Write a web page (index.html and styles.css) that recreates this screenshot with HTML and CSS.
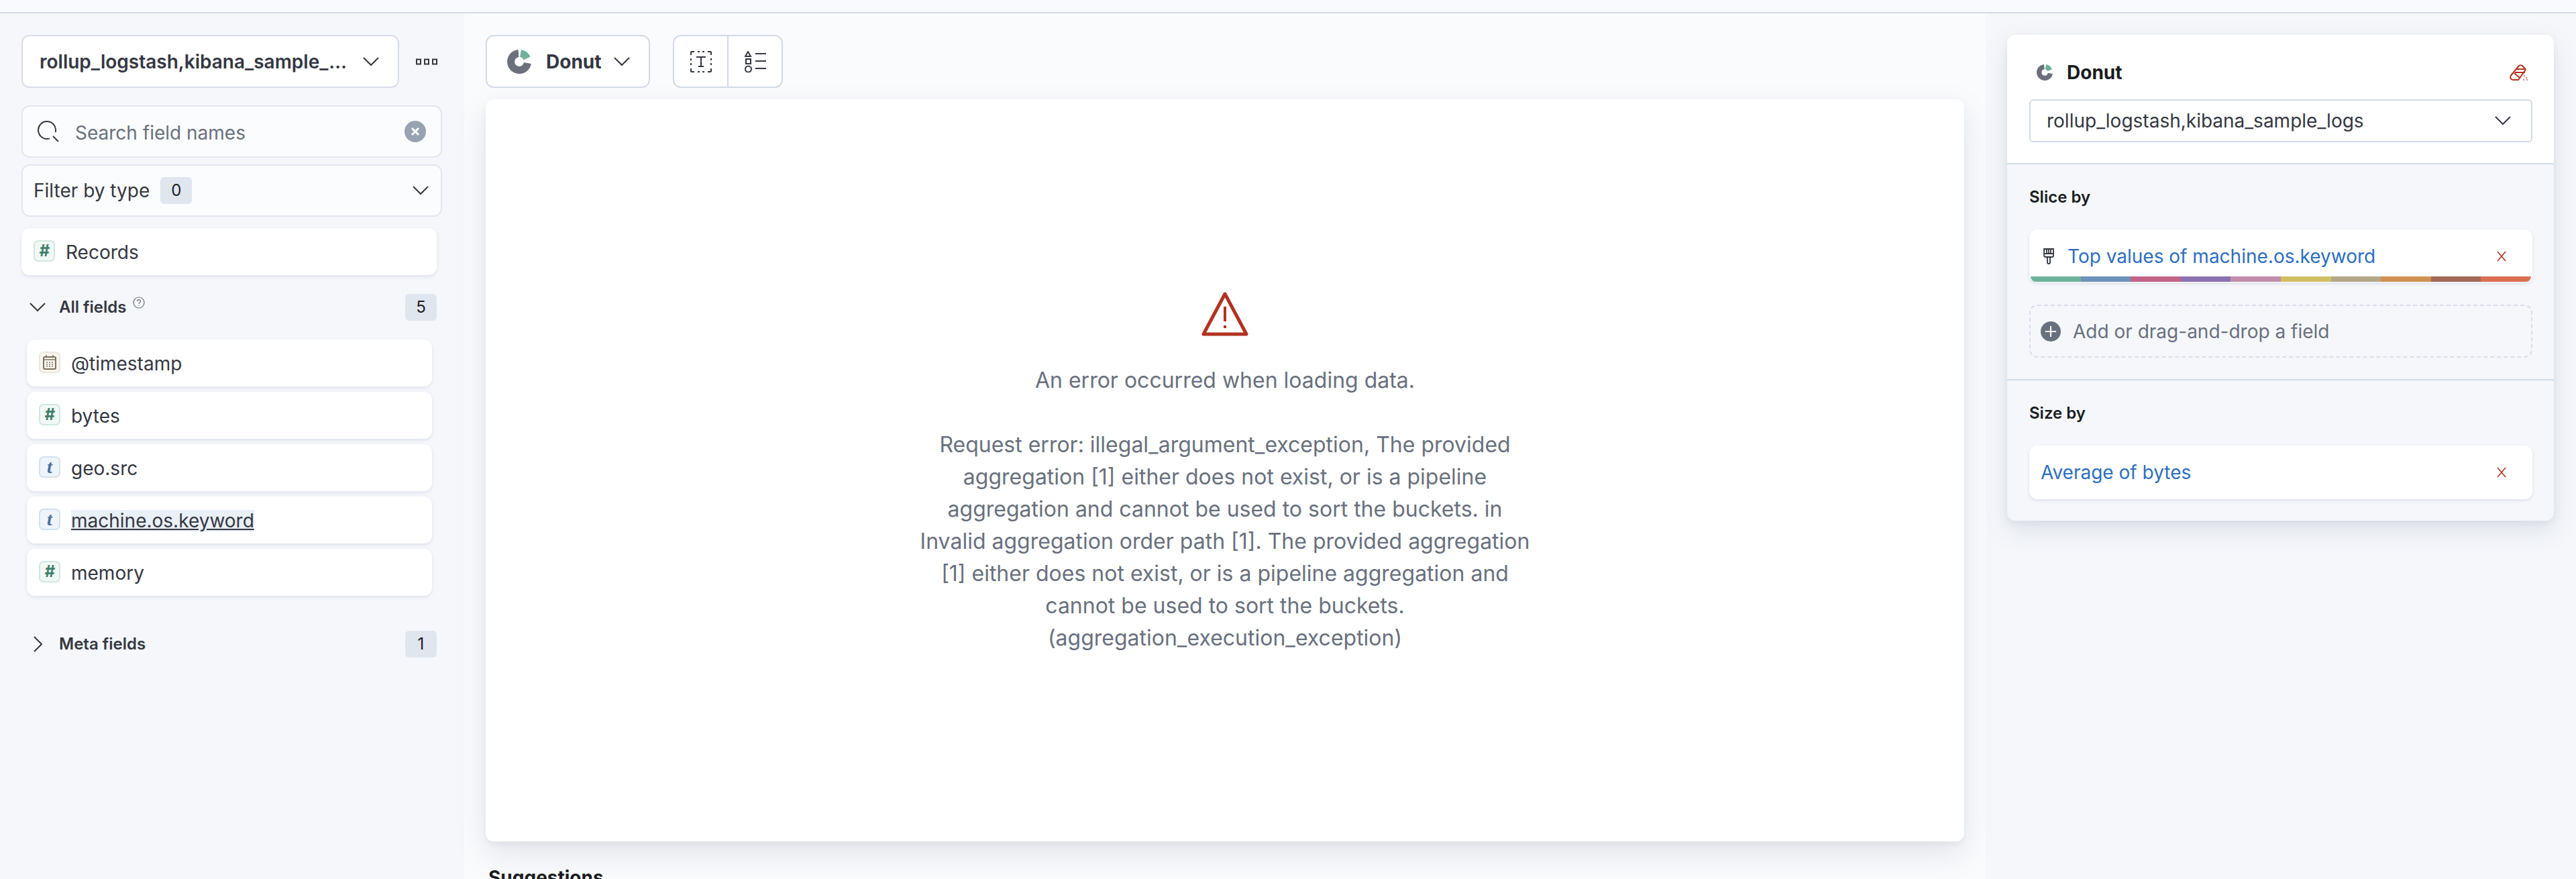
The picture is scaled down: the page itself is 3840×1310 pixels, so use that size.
FILE: index.html
```html
<!DOCTYPE html>
<html lang="en">
<head>
    <meta charset="UTF-8">
    <title>Lens - Donut</title>
    <link rel="stylesheet" href="styles.css">
</head>
<body>
    <div class="topbar"></div>
    <div class="app">
        <!-- field list -->
        <aside class="sidebar">
            <div class="index-row">
                <div class="index-select">
                    <span class="index-name">rollup_logstash,kibana_sample_logs</span>
                    <svg class="chev" viewBox="0 0 24 14"><path d="M1 1l11 11L23 1"/></svg>
                </div>
                <svg class="more" viewBox="0 0 32 10"><path d="M1 1.500h6v7H1zM13 1.500h6v7h-6zM25 1.500h6v7h-6z"/></svg>
            </div>
            <div class="search-box">
                <svg class="search-icon" viewBox="0 0 32 32"><path d="M26.700 17A13 13 0 1 0 18 26.400M23 23l8 8"/></svg>
                <span class="placeholder">Search field names</span>
                <svg class="clear-icon" viewBox="0 0 32 32"><circle cx="16" cy="16" r="16"/><path d="M11 11l10 10M21 11L11 21"/></svg>
            </div>
            <div class="filter-box">
                <span>Filter by type</span>
                <span class="count count-filter">0</span>
                <svg class="chev chev-end" viewBox="0 0 24 14"><path d="M1 1l11 11L23 1"/></svg>
            </div>
            <div class="field field-records"><span class="type type-num">#</span><span class="field-name">Records</span></div>
            <div class="group-row group-all">
                <svg class="chev chev-group" viewBox="0 0 24 14"><path d="M1 1l11 11L23 1"/></svg>
                <span class="group-name">All fields</span>
                <svg class="help-icon" viewBox="0 0 18 18"><circle cx="9" cy="9" r="8"/><path d="M6.500 7c0-3.200 5-3.200 5 0 0 2-2.500 2-2.500 4M9 13v1"/></svg>
                <span class="count">5</span>
            </div>
            <div class="field-list">
                <div class="field">
                    <span class="type type-date">
                        <svg viewBox="0 0 20 24"><rect x="1" y="4" width="18" height="18" rx="2"/><path d="M5 1v4M15 1v4M1 8h18M5 12h2M9 12h2M13 12h2M5 15h2M9 15h2M13 15h2M5 18h2M9 18h2M13 18h2"/></svg>
                    </span>
                    <span class="field-name">@timestamp</span>
                </div>
                <div class="field"><span class="type type-num">#</span><span class="field-name">bytes</span></div>
                <div class="field"><span class="type type-text">t</span><span class="field-name">geo.src</span></div>
                <div class="field"><span class="type type-text">t</span><span class="field-name field-hover">machine.os.keyword</span></div>
                <div class="field"><span class="type type-num">#</span><span class="field-name">memory</span></div>
            </div>
            <div class="group-row group-meta">
                <svg class="chev chev-closed" viewBox="0 0 14 24"><path d="M1 1l11 11L1 23"/></svg>
                <span class="group-name">Meta fields</span>
                <span class="count">1</span>
            </div>
        </aside>

        <!-- workspace -->
        <main class="workspace">
            <div class="toolbar">
                <div class="chart-switch">
                    <svg class="donut-big" viewBox="0 0 36 36">
                        <path class="donut-gray" d="M30.400 20A12.500 12.500 0 1 1 17 5.500"/>
                        <path class="donut-green" d="M20 5.600A12.500 12.500 0 0 1 29.500 13"/>
                    </svg>
                    <span>Donut</span>
                    <svg class="chev" viewBox="0 0 24 14"><path d="M1 1l11 11L23 1"/></svg>
                </div>
                <div class="btn-group">
                    <div class="icon-btn">
                        <svg viewBox="0 0 32 32"><path d="M1 6V2a1 1 0 0 1 1-1h4M11 1h3M18 1h3M26 1h4a1 1 0 0 1 1 1v4M1 11v3M1 18v3M31 11v3M31 18v3M1 26v4a1 1 0 0 0 1 1h4M11 31h3M18 31h3M26 31h4a1 1 0 0 0 1-1v-4M9 9h14M16 9v14M12 23h8"/></svg>
                    </div>
                    <div class="icon-btn">
                        <svg viewBox="0 0 32 32"><path d="M5 1l4 7H1zM2 12h7v7H2zM16 4h16M16 15h16M16 26h16"/><circle cx="5.500" cy="27" r="4.500"/></svg>
                    </div>
                </div>
            </div>
            <section class="chart-card">
                <svg class="warn-icon" viewBox="0 0 70 66"><path d="M35 3L67 63H3z"/><path class="warn-mark" d="M35 22v22M35 50v4"/></svg>
                <p class="error-title">An error occurred when loading data.</p>
                <p class="error-text">Request error: illegal_argument_exception, The provided aggregation [1] either does not exist, or is a pipeline aggregation and cannot be used to sort the buckets. in Invalid aggregation order path [1]. The provided aggregation [1] either does not exist, or is a pipeline aggregation and cannot be used to sort the buckets. (aggregation_execution_exception)</p>
            </section>
            <h2 class="suggestions">Suggestions</h2>
        </main>

        <!-- config panel -->
        <aside class="config">
            <div class="config-card">
                <header class="config-head">
                    <div class="config-title">
                        <svg class="donut-small" viewBox="0 0 36 36">
                            <path class="donut-gray" d="M30.400 20A12.500 12.500 0 1 1 17 5.500"/>
                            <path class="donut-green" d="M20 5.600A12.500 12.500 0 0 1 29.500 13"/>
                        </svg>
                        <span>Donut</span>
                        <svg class="eraser" viewBox="0 0 28 24"><path d="M14 23H6a4 4 0 0 1-3-6.500L14.500 2.500a4 4 0 0 1 6 0l3 3a3 3 0 0 1 0 4.500zM12 7h12M9 12h15M8 13l8 7"/><path class="eraser-dots" d="M22 17h2M25 20h2M21 23h2M26 23h2"/></svg>
                    </div>
                    <div class="layer-select">
                        <span>rollup_logstash,kibana_sample_logs</span>
                        <svg class="chev" viewBox="0 0 24 14"><path d="M1 1l11 11L23 1"/></svg>
                    </div>
                </header>
                <div class="config-group">
                    <h3>Slice by</h3>
                    <div class="dim-card">
                        <div class="dim-row">
                            <svg class="brush" viewBox="0 0 18 24"><path d="M2 1h14v10a2 2 0 0 1-2 2H4a2 2 0 0 1-2-2zM2 8h14M6 1v7M9 1v7M12 1v7M7 13v8a2 2 0 0 0 4 0v-8"/></svg>
                            <span class="dim-name">Top values of machine.os.keyword</span>
                            <svg class="remove" viewBox="0 0 14 16"><path d="M1 1l12 14M13 1L1 15"/></svg>
                        </div>
                        <div class="palette">
                            <i class="c1"></i><i class="c2"></i><i class="c3"></i><i class="c4"></i><i class="c5"></i><i class="c6"></i><i class="c7"></i><i class="c8"></i><i class="c9"></i><i class="c10"></i>
                        </div>
                    </div>
                    <div class="add-field">
                        <svg class="plus" viewBox="0 0 30 30"><circle cx="15" cy="15" r="15"/><path d="M15 7v16M7 15h16"/></svg>
                        <span>Add or drag-and-drop a field</span>
                    </div>
                </div>
                <div class="config-group config-group-last">
                    <h3>Size by</h3>
                    <div class="dim-card dim-card-plain">
                        <span class="dim-name">Average of bytes</span>
                        <svg class="remove" viewBox="0 0 14 16"><path d="M1 1l12 14M13 1L1 15"/></svg>
                    </div>
                </div>
            </div>
        </aside>
    </div>
</body>
</html>
```

FILE: styles.css
```css
* {
    box-sizing: border-box;
}

html, body {
    margin: 0;
    height: 1310px;
    overflow: hidden;
}

body {
    font-family: Inter, "Liberation Sans", sans-serif;
    font-size: 28px;
    line-height: 40px;
    color: #343741;
    background: #f5f7fb;
}

svg {
    display: block;
    flex: none;
    fill: none;
}

.topbar {
    height: 20px;
    background: #f9fafd;
    border-bottom: 2px solid #d3dae6;
}

.app {
    display: flex;
    height: 1290px;
}

.chev path {
    fill: none;
    stroke: #343741;
    stroke-width: 2;
}

.chev {
    width: 24px;
    height: 14px;
}

/* sidebar */
.sidebar {
    width: 692px;
    flex: none;
    padding: 32px 33px 0 32px;
}

.index-row {
    display: flex;
    align-items: center;
    justify-content: space-between;
    margin-bottom: 26px;
    padding-right: 7px;
}

.index-select {
    width: 563px;
    height: 79px;
    display: flex;
    align-items: center;
    justify-content: space-between;
    padding: 0 28px 0 25px;
    background: #fff;
    border: 2px solid #d9deea;
    border-radius: 12px;
}

.index-name {
    width: 465px;
    font-weight: 600;
    white-space: nowrap;
    overflow: hidden;
    text-overflow: ellipsis;
}

.more {
    width: 32px;
    height: 10px;
}

.more path {
    stroke: #343741;
    stroke-width: 2;
}

.search-box, .filter-box {
    height: 78px;
    display: flex;
    align-items: center;
    background: #fbfcfd;
    border: 2px solid #e3e6f0;
    border-radius: 12px;
}

.search-box {
    padding: 0 22px;
    margin-bottom: 10px;
}

.search-icon {
    width: 32px;
    height: 32px;
    margin-right: 24px;
}

.search-icon path {
    stroke: #343741;
    stroke-width: 2;
}

.placeholder {
    flex: 1;
    padding-top: 3px;
    color: #69707d;
}

.clear-icon {
    width: 32px;
    height: 32px;
}

.clear-icon circle {
    fill: #98a2b3;
}

.clear-icon path {
    stroke: #fff;
    stroke-width: 3;
}

.filter-box {
    padding: 0 18px 0 16px;
    margin-bottom: 17px;
}

.count {
    width: 47px;
    height: 40px;
    display: flex;
    align-items: center;
    justify-content: center;
    background: #e0e5ee;
    border-radius: 6px;
    font-size: 24px;
    color: #1a1c21;
}

.count-filter {
    margin-left: 16px;
}

.chev-end {
    margin-left: auto;
}

.field {
    height: 70px;
    display: flex;
    align-items: center;
    padding-left: 18px;
    background: #fff;
    border-radius: 12px;
    box-shadow: 0 2px 5px rgba(152, 162, 179, 0.25);
}

.field-records {
    width: 619px;
    margin-bottom: 28px;
}

.field-name {
    margin-top: 2px;
}

.type {
    width: 32px;
    height: 32px;
    margin: -2px 16px 0 0;
    display: flex;
    align-items: center;
    justify-content: center;
    flex: none;
    border: 2px solid;
    border-radius: 7px;
    font-size: 24px;
    line-height: 1;
    font-style: italic;
    font-weight: 700;
}

.type-num {
    color: #3f7f6a;
    background: #f1f8f5;
    border-color: #cfe7de;
}

.type-text {
    color: #4a6f9c;
    background: #eef4fa;
    border-color: #d3e1f1;
    font-family: "Liberation Serif", serif;
    font-size: 28px;
}

.type-date {
    background: #f8f5f0;
    border-color: #ece7de;
}

.type-date svg {
    width: 20px;
    height: 24px;
}

.type-date svg rect, .type-date svg path {
    stroke: #7c6f5c;
    stroke-width: 2;
}

.type-date svg path {
    stroke-width: 1.500;
}

.group-row {
    height: 40px;
    width: 619px;
    display: flex;
    align-items: center;
}

.group-all {
    padding-left: 12px;
    margin-bottom: 28px;
}

.group-meta {
    padding-left: 18px;
    margin-top: 52px;
}

.group-name {
    font-size: 24px;
    font-weight: 600;
}

.chev-group {
    margin-right: 20px;
}

.chev-closed {
    width: 14px;
    height: 24px;
    margin-right: 24px;
}

.help-icon {
    width: 18px;
    height: 18px;
    margin: -14px 0 0 10px;
}

.help-icon circle, .help-icon path {
    stroke: #69707d;
    stroke-width: 1.200;
}

.group-row .count {
    margin-left: auto;
}

.field-list {
    display: flex;
    flex-direction: column;
    gap: 8px;
    width: 604px;
    margin-left: 8px;
}

.field-hover {
    background: #e9f0f8;
    text-decoration: underline;
    line-height: 32px;
}

/* workspace */
.workspace {
    flex: 1;
    min-width: 0;
    padding: 32px 32px 0;
    background: #fafbfd;
}

.toolbar {
    display: flex;
    height: 79px;
    gap: 34px;
    margin-bottom: 17px;
}

.chart-switch {
    width: 245px;
    display: flex;
    align-items: center;
    padding-left: 30px;
    background: #fff;
    border: 2px solid #d3dae6;
    border-radius: 12px;
    font-weight: 700;
}

.chart-switch span {
    margin: 0 18px 0 22px;
}

.donut-big {
    width: 36px;
    height: 36px;
}

.donut-small {
    width: 24px;
    height: 24px;
}

.donut-gray, .donut-green {
    fill: none;
    stroke-width: 11;
}

.donut-gray {
    stroke: #6c6f7c;
}

.donut-green {
    stroke: #6db39b;
}

.btn-group {
    width: 164px;
    display: flex;
    background: #fff;
    border: 2px solid #d3dae6;
    border-radius: 12px;
}

.icon-btn {
    flex: 1;
    display: flex;
    align-items: center;
    justify-content: center;
}

.icon-btn + .icon-btn {
    border-left: 2px solid #d3dae6;
}

.icon-btn svg {
    width: 32px;
    height: 32px;
}

.icon-btn path, .icon-btn circle {
    stroke: #343741;
    stroke-width: 2;
}

.chart-card {
    height: 1106px;
    display: flex;
    flex-direction: column;
    align-items: center;
    padding-top: 287px;
    background: #fff;
    border-radius: 12px;
    box-shadow: 0 4px 8px rgba(100, 110, 130, 0.08), 0 18px 46px rgba(100, 110, 130, 0.16);
    color: #69707d;
    font-size: 32px;
    text-align: center;
}

.warn-icon {
    width: 70px;
    height: 66px;
    margin-bottom: 42px;
}

.warn-icon path {
    stroke: #b23222;
    stroke-width: 5;
    stroke-linejoin: round;
}

.warn-icon .warn-mark {
    stroke-width: 4;
}

.chart-card p {
    margin: 0;
    line-height: 48px;
}

.error-title {
    margin-bottom: 48px !important;
}

.error-text {
    width: 920px;
}

.suggestions {
    margin: 34px 0 0 4px;
    font-size: 28px;
    line-height: 40px;
    font-weight: 700;
    color: #1a1c21;
}

/* config panel */
.config {
    width: 880px;
    flex: none;
    padding: 32px 33px 0 32px;
}

.config-card {
    border-radius: 12px;
    background: #f5f7fb;
    overflow: hidden;
    box-shadow: 0 4px 8px rgba(100, 110, 130, 0.08), 0 14px 36px rgba(100, 110, 130, 0.16);
}

.config-head {
    height: 193px;
    padding: 32px 32px 0 33px;
    background: #fff;
    border-bottom: 2px solid #d3dae6;
}

.config-title {
    height: 48px;
    display: flex;
    align-items: center;
    padding-left: 11px;
    margin-bottom: 16px;
    font-weight: 700;
    color: #1a1c21;
}

.config-title span {
    margin-left: 21px;
}

.eraser {
    width: 28px;
    height: 24px;
    margin: 0 7px 0 auto;
}

.eraser path {
    stroke: #b23222;
    stroke-width: 2;
}

.eraser .eraser-dots {
    opacity: 0.6;
}

.layer-select {
    height: 64px;
    display: flex;
    align-items: center;
    justify-content: space-between;
    padding: 0 30px 0 24px;
    background: #fff;
    border: 2px solid #d3dae6;
    border-radius: 6px;
}

.config-group {
    padding: 33px 32px 32px 33px;
    border-bottom: 2px solid #d3dae6;
}

.config-group-last {
    border-bottom: 0;
}

.config-group h3 {
    margin: 0 0 32px;
    font-size: 24px;
    line-height: 32px;
    font-weight: 600;
    color: #1a1c21;
}

.dim-card {
    height: 79px;
    display: flex;
    flex-direction: column;
    background: #fff;
    border-radius: 12px;
    box-shadow: 0 2px 5px rgba(152, 162, 179, 0.25);
    margin-bottom: 33px;
}

.dim-card-plain {
    height: 80px;
    flex-direction: row;
    align-items: center;
    padding: 0 39px 0 17px;
    margin-bottom: 0;
}

.dim-row {
    flex: 1;
    display: flex;
    align-items: center;
    padding: 10px 39px 0 20px;
}

.dim-name {
    flex: 1;
    color: #2c6ebf;
}

.brush {
    width: 18px;
    height: 24px;
    margin-right: 19px;
}

.brush path {
    stroke: #343741;
    stroke-width: 1.800;
}

.remove {
    width: 14px;
    height: 16px;
}

.remove path {
    stroke: #b23222;
    stroke-width: 1.600;
}

.palette {
    display: flex;
    height: 8px;
    margin: 0 2px 1px;
    border-radius: 0 0 10px 10px;
    overflow: hidden;
}

.palette i {
    flex: 1;
}

.c1 { background: #6eb39b; }
.c2 { background: #6d92bb; }
.c3 { background: #c36487; }
.c4 { background: #8c72b2; }
.c5 { background: #c28dab; }
.c6 { background: #d1bf63; }
.c7 { background: #b5a88a; }
.c8 { background: #d09050; }
.c9 { background: #a26857; }
.c10 { background: #db6f52; }

.add-field {
    height: 79px;
    display: flex;
    align-items: center;
    padding-left: 15px;
    border: 2px dashed #d9deea;
    border-radius: 12px;
    color: #69707d;
}

.plus {
    width: 30px;
    height: 30px;
    margin-right: 18px;
}

.plus circle {
    fill: #69707d;
}

.plus path {
    stroke: #fff;
    stroke-width: 2;
}
```
